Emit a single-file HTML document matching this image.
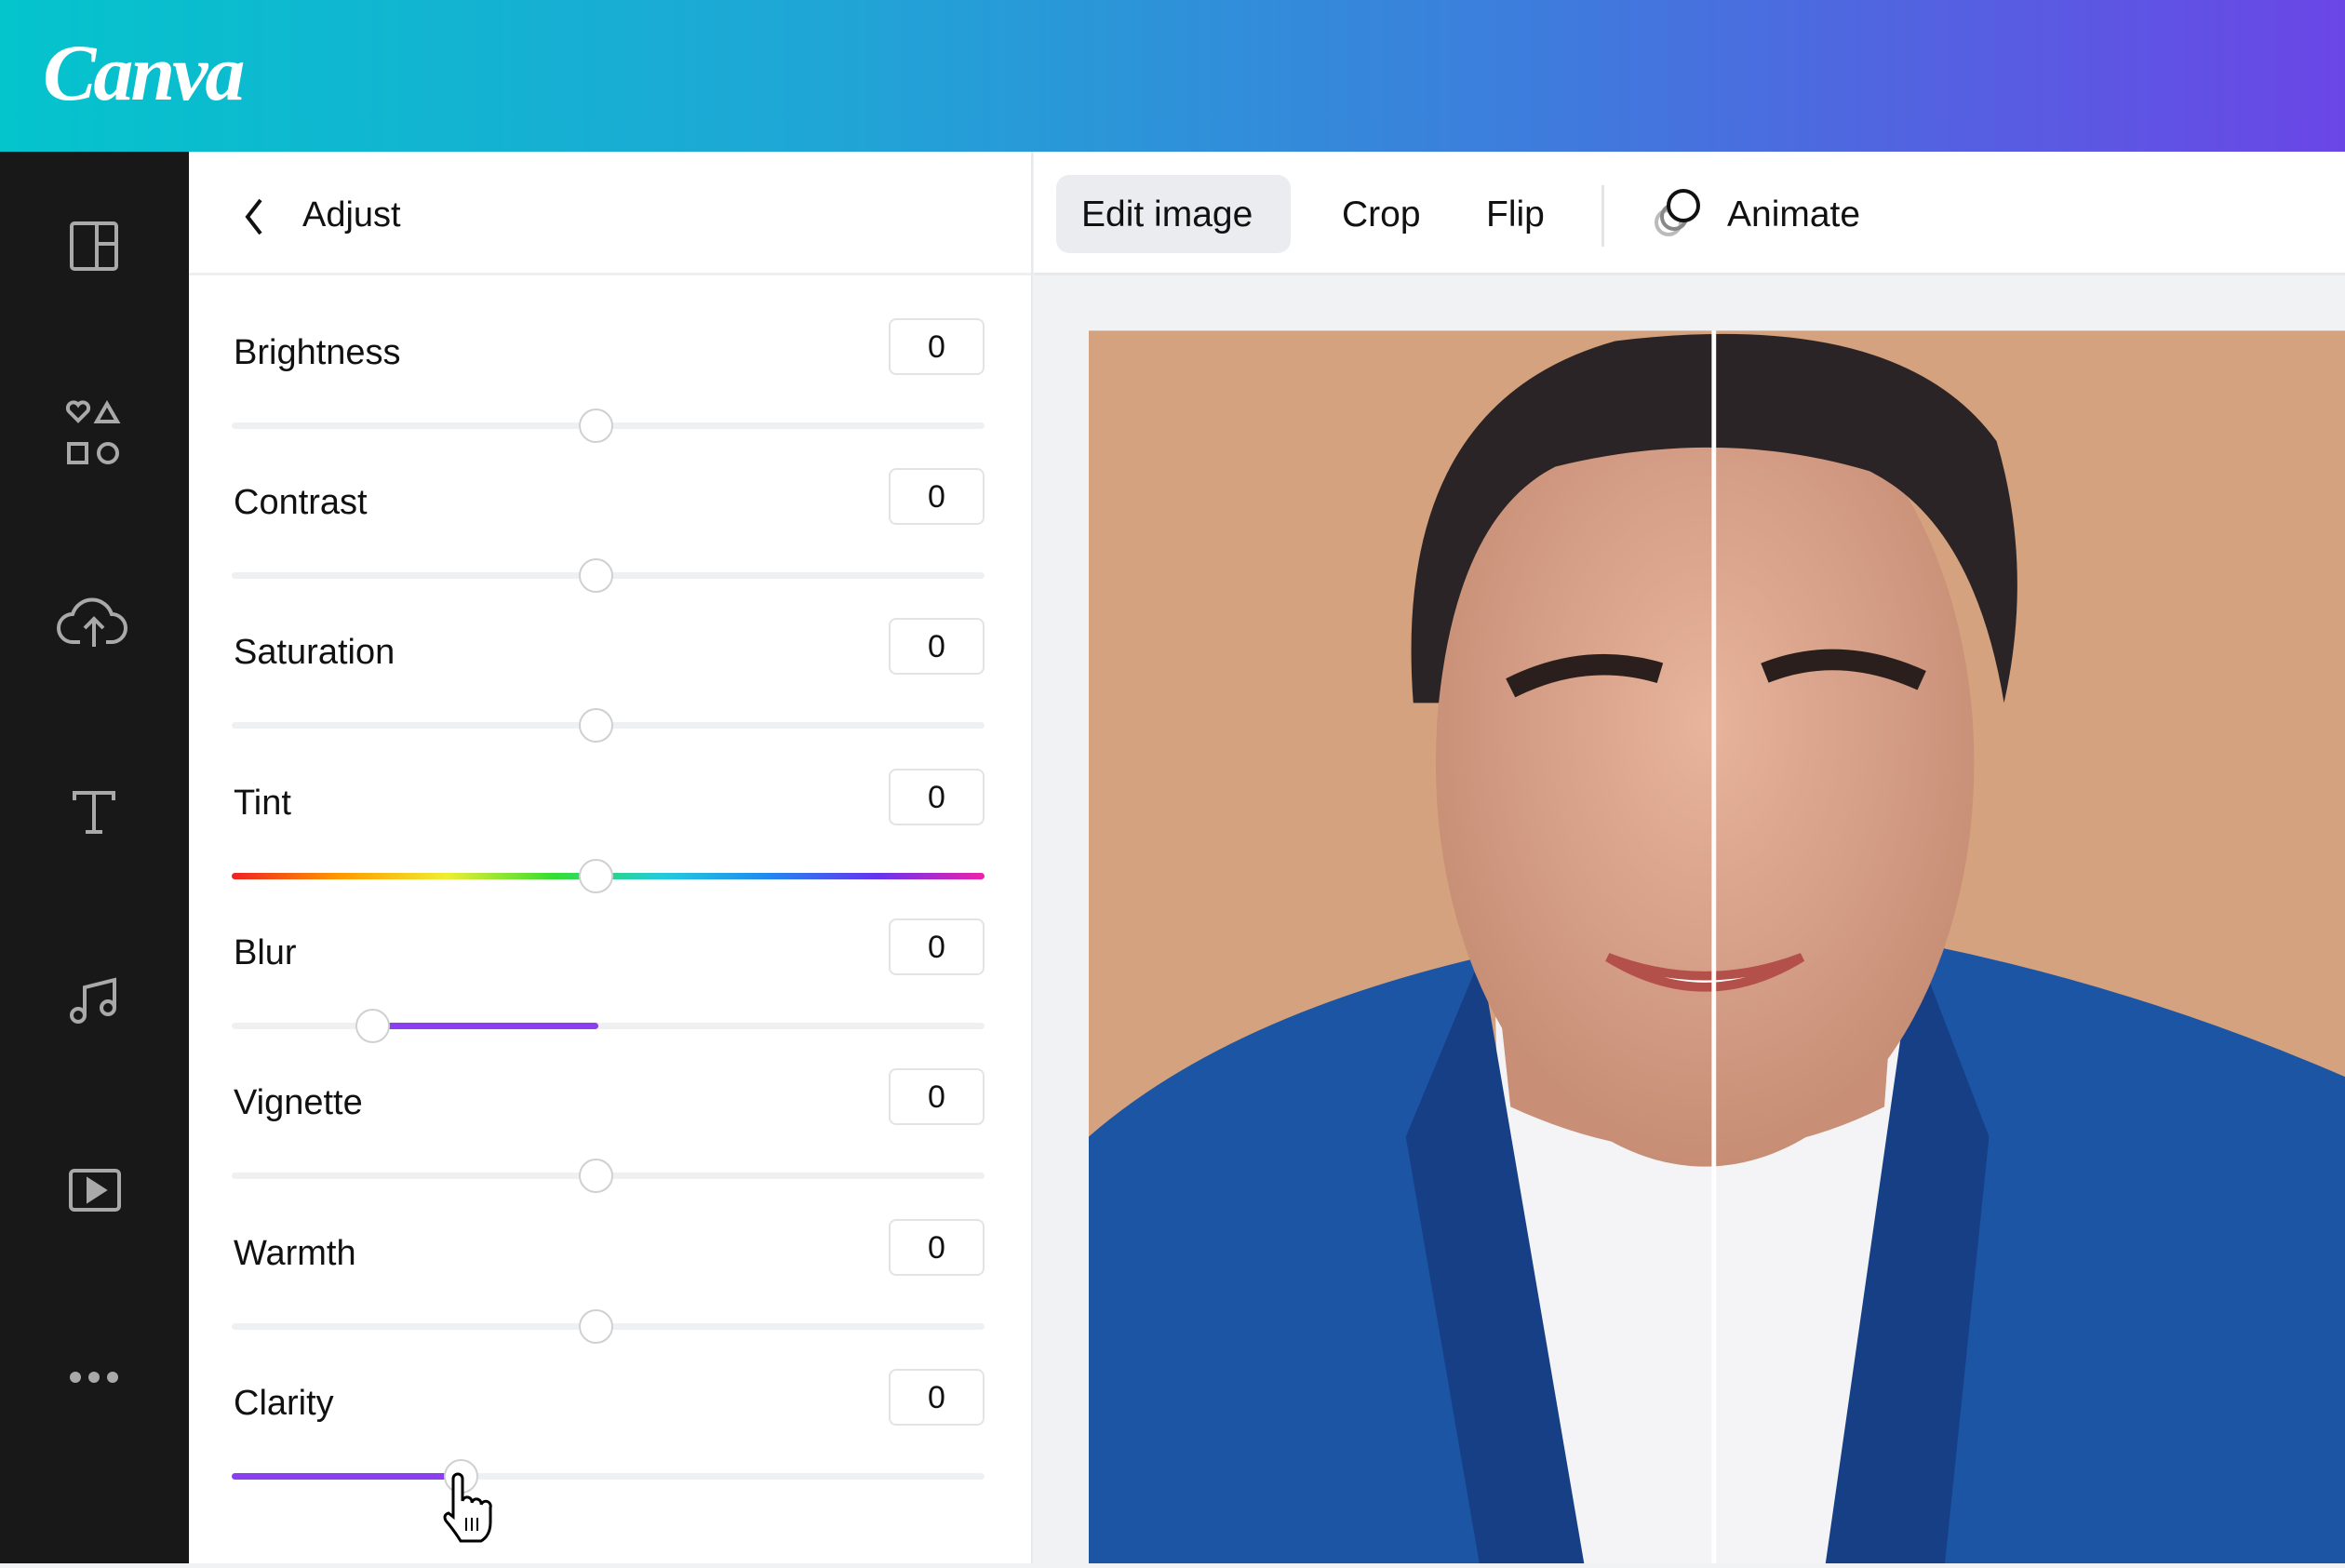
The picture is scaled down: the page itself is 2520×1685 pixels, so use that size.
<!DOCTYPE html>
<html><head><meta charset="utf-8"><style>
*{margin:0;padding:0;box-sizing:border-box}
body{width:2520px;height:1680px;overflow:hidden;position:relative;font-family:"Liberation Sans",sans-serif;background:#f1f2f4}
.hdr{position:absolute;left:0;top:0;width:2520px;height:163px;background:linear-gradient(90deg,#04c4cc 0%,#1fa6d6 35%,#3d7ddc 65%,#6a46e6 100%)}
.logo{position:absolute;left:46px;top:28px;color:#fff;font-family:"Liberation Serif",serif;font-style:italic;font-weight:bold;font-size:86px;letter-spacing:-3px}
.side{position:absolute;left:0;top:163px;width:203px;height:1517px;background:#181818}
.panel{position:absolute;left:203px;top:163px;width:907px;height:1517px;background:#fff;border-right:2px solid #e8e9ec}
.ph{position:absolute;left:0;top:0;width:905px;height:133px;border-bottom:3px solid #eeeff2}
.ph span{position:absolute;left:122px;top:47px;font-size:38px;color:#111}
.row{position:absolute;left:203px;width:905px;height:161px}
.row .l{position:absolute;left:48px;top:16px;font-size:38px;color:#111}
.row .b{position:absolute;left:752px;top:0;width:103px;height:61px;border:2px solid #e2e3e6;border-radius:8px;font-size:34px;text-align:center;line-height:59px;color:#111}
.row .t{position:absolute;left:46px;top:112px;width:809px;height:7px;border-radius:4px;background:#eff0f2}
.row .k{position:absolute;top:97px;width:37px;height:37px;border-radius:50%;background:#fff;border:2px solid #cfd0d3}
.row .p{position:absolute;top:112px;height:7px;border-radius:4px;background:#8b3ff0}
.tb{position:absolute;left:1111px;top:163px;width:1409px;height:133px;background:#fff;border-bottom:3px solid #e8e9ec}
.tb .e{position:absolute;left:24px;top:25px;width:252px;height:84px;border-radius:14px;background:#ebecef}
.tb span{position:absolute;top:46px;font-size:39px;color:#111}
</style></head><body>
<div class="hdr"><div class="logo">Canva</div></div>
<div class="side">
<svg width="203" height="1517" viewBox="0 163 203 1517" fill="none" stroke="#a9a9a9" stroke-width="4">
<rect x="77" y="240" width="48" height="49" rx="3"/><line x1="104" y1="240" x2="104" y2="289"/><line x1="104" y1="262" x2="125" y2="262"/>
<path d="M84 452 l-10 -10 a6 6 0 0 1 10 -7 a6 6 0 0 1 10 7z"/><path d="M115 434 l11 19 h-22z"/><rect x="74" y="477" width="19" height="20"/><circle cx="116" cy="487" r="10"/>
<path d="M86 690 h-8 a15 15 0 0 1 0 -30 a22 22 0 0 1 42 0 a15 15 0 0 1 0 30 h-6"/><path d="M101 695 v-30 m-10 10 l10 -10 10 10"/>
<path d="M80 860 v-8 h42 v8 M101 852 v42 M92 894 h18"/>
<circle cx="84" cy="1091" r="7"/><circle cx="116" cy="1083" r="7"/><path d="M91 1091 v-30 l32 -8 v30"/>
<rect x="76" y="1258" width="52" height="42" rx="4"/><path d="M95 1268 v22 l17 -11z" fill="#a9a9a9"/>
<g fill="#a9a9a9" stroke="none"><circle cx="81" cy="1480" r="6"/><circle cx="101" cy="1480" r="6"/><circle cx="121" cy="1480" r="6"/></g>
</svg></div>
<div class="panel"><div class="ph">
<svg style="position:absolute;left:55px;top:48px" width="30" height="45"><path d="M22 4 L8 22 L22 40" fill="none" stroke="#111" stroke-width="4"/></svg>
<span>Adjust</span></div></div>

<div class="row" style="top:342px"><div class="l">Brightness</div><div class="b">0</div><div class="t"></div><div class="k" style="left:419px"></div></div>
<div class="row" style="top:503px"><div class="l">Contrast</div><div class="b">0</div><div class="t"></div><div class="k" style="left:419px"></div></div>
<div class="row" style="top:664px"><div class="l">Saturation</div><div class="b">0</div><div class="t"></div><div class="k" style="left:419px"></div></div>
<div class="row" style="top:826px"><div class="l">Tint</div><div class="b">0</div><div class="t" style="background:linear-gradient(90deg,#e22,#f90,#ee3,#3d3,#2cd,#28e,#63e,#e2a)"></div><div class="k" style="left:419px"></div></div>
<div class="row" style="top:987px"><div class="l">Blur</div><div class="b">0</div><div class="t"></div><div class="p" style="left:197px;width:243px"></div><div class="k" style="left:179px"></div></div>
<div class="row" style="top:1148px"><div class="l">Vignette</div><div class="b">0</div><div class="t"></div><div class="k" style="left:419px"></div></div>
<div class="row" style="top:1310px"><div class="l">Warmth</div><div class="b">0</div><div class="t"></div><div class="k" style="left:419px"></div></div>
<div class="row" style="top:1471px"><div class="l">Clarity</div><div class="b">0</div><div class="t"></div><div class="p" style="left:46px;width:250px"></div><div class="k" style="left:274px"></div>
<svg style="position:absolute;left:270px;top:110px" width="60" height="80" viewBox="0 0 60 80"><path d="M14 8 a5 5 0 0 1 10 0 v24 a5 5 0 0 1 10 2 a5 5 0 0 1 10 2 a5 5 0 0 1 10 3 v16 q0 14 -10 20 h-22 q-6 -10 -16 -22 q-3 -6 3 -8 l5 4z" fill="#fff" stroke="#000" stroke-width="3"/><path d="M28 50 v14 M34 50 v14 M40 50 v14" stroke="#000" stroke-width="2"/></svg></div>

<div class="tb"><div class="e"></div>
<span style="left:51px">Edit image</span><span style="left:331px">Crop</span><span style="left:486px">Flip</span>
<div style="position:absolute;left:610px;top:36px;width:3px;height:66px;background:#e3e4e7"></div>
<svg style="position:absolute;left:660px;top:30px" width="70" height="70"><circle cx="22" cy="46" r="13" fill="none" stroke="#bbb" stroke-width="4"/><circle cx="28" cy="40" r="13" fill="none" stroke="#888" stroke-width="4"/><circle cx="38" cy="28" r="16" fill="#fff" stroke="#111" stroke-width="4"/></svg>
<span style="left:745px">Animate</span></div>

<svg style="position:absolute;left:0;top:0" width="2520" height="1680" viewBox="0 0 1568 1045.3" preserveAspectRatio="none">
<defs><clipPath id="c"><rect x="728" y="221" width="840" height="830"/></clipPath>
<radialGradient id="s" cx="0.5" cy="0.45" r="0.6"><stop offset="0" stop-color="#e8b49c"/><stop offset="1" stop-color="#c48a72"/></radialGradient></defs>
<g clip-path="url(#c)">
<rect x="728" y="221" width="840" height="830" fill="#d4a27e"/>
<path d="M1000 680 L1010 1050 L1290 1050 L1300 680z" fill="#f4f4f6"/>
<path d="M728 760 Q820 680 990 640 L1040 1050 L728 1050z" fill="#1c55a4"/>
<path d="M1568 720 Q1430 660 1280 630 L1230 1050 L1568 1050z" fill="#1c55a4"/>
<path d="M990 640 L1060 1050 L990 1050 L940 760z" fill="#173f86"/>
<path d="M1280 630 L1220 1050 L1300 1050 L1330 760z" fill="#173f86"/>
<path d="M995 600 L1010 740 Q1140 800 1260 740 L1270 600z" fill="#c88e76"/>
<ellipse cx="1140" cy="510" rx="180" ry="270" fill="url(#s)"/>
<path d="M945 470 Q930 270 1080 228 Q1270 205 1335 295 Q1360 380 1340 470 Q1320 350 1250 315 Q1150 285 1040 312 Q975 345 962 470z" fill="#2b2426"/>
<path d="M1010 460 Q1060 435 1110 450 M1180 450 Q1230 430 1285 455" stroke="#2a1f1c" stroke-width="14" fill="none"/>
<path d="M1075 640 Q1140 680 1205 640 Q1140 665 1075 640z" fill="#fff" stroke="#b4504a" stroke-width="6"/>
</g>
<rect x="1144.5" y="221" width="3" height="830" fill="#fff"/>
</svg>
</body></html>
